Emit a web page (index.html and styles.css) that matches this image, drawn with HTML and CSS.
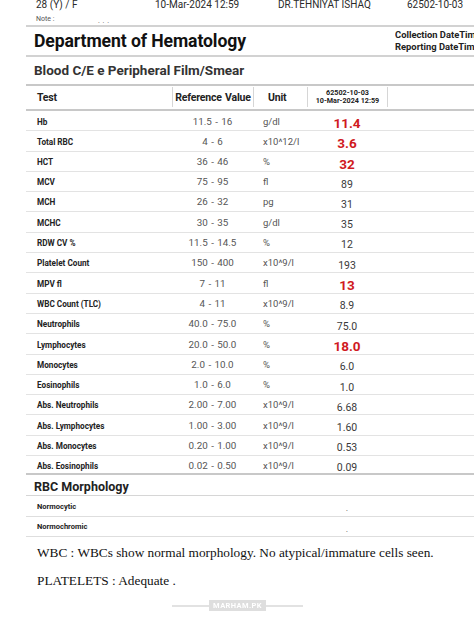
FILE: index.html
```html
<!DOCTYPE html>
<html lang="en">
<head>
    <meta charset="UTF-8">
    <meta name="viewport" content="width=device-width, initial-scale=1.0">
    <title>Department of Hematology - Report</title>
    <link rel="stylesheet" href="styles.css">
</head>
<body>
<div class="page">
    <div class="meta">
        <div class="meta-row">
            <span class="meta-patient">28 (Y) / F</span>
            <span class="meta-date">10-Mar-2024 12:59</span>
            <span class="meta-doctor">DR.TEHNIYAT ISHAQ</span>
            <span class="meta-id">62502-10-03</span>
        </div>
        <div class="note">
            <span class="note-label">Note :</span>
            <span class="note-val">. . .</span>
        </div>
    </div>

    <div class="dept">
        <h1>Department of Hematology</h1>
        <div class="dates">
            <div>Collection DateTime</div>
            <div>Reporting DateTime</div>
        </div>
    </div>

    <h2 class="panel">Blood C/E e Peripheral Film/Smear</h2>

    <div class="results">
        <div class="row head">
            <div class="c-test">Test</div>
            <div class="c-ref">Reference Value</div>
            <div class="c-unit">Unit</div>
            <div class="c-val"><span>62502-10-03</span><span>10-Mar-2024 12:59</span></div>
            <div class="c-rest"></div>
        </div>
        <div id="resultRows"></div>
    </div>

    <h2 class="sub">RBC Morphology</h2>
    <div class="morph">
        <div class="row"><div class="c-test">Normocytic</div><div></div><div></div><div class="c-val dot">.</div><div></div></div>
        <div class="row"><div class="c-test">Normochromic</div><div></div><div></div><div class="c-val dot">.</div><div></div></div>
    </div>

    <div class="remarks">
        <p class="remark">WBC : WBCs show normal morphology. No atypical/immature cells seen.</p>
        <p class="remark">PLATELETS : Adequate .</p>
    </div>

    <div class="watermark">
        <span class="rule"></span>
        <span class="mark">MARHAM.PK</span>
        <span class="rule"></span>
    </div>
</div>

<script>
    // name, reference, unit, result, flagged
    const results = [
        ["Hb", "11.5 - 16", "g/dl", "11.4", true],
        ["Total RBC", "4 - 6", "x10^12/l", "3.6", true],
        ["HCT", "36 - 46", "%", "32", true],
        ["MCV", "75 - 95", "fl", "89", false],
        ["MCH", "26 - 32", "pg", "31", false],
        ["MCHC", "30 - 35", "g/dl", "35", false],
        ["RDW CV %", "11.5 - 14.5", "%", "12", false],
        ["Platelet Count", "150 - 400", "x10^9/l", "193", false],
        ["MPV fl", "7 - 11", "fl", "13", true],
        ["WBC Count (TLC)", "4 - 11", "x10^9/l", "8.9", false],
        ["Neutrophils", "40.0 - 75.0", "%", "75.0", false],
        ["Lymphocytes", "20.0 - 50.0", "%", "18.0", true],
        ["Monocytes", "2.0 - 10.0", "%", "6.0", false],
        ["Eosinophils", "1.0 - 6.0", "%", "1.0", false],
        ["Abs. Neutrophils", "2.00 - 7.00", "x10^9/l", "6.68", false],
        ["Abs. Lymphocytes", "1.00 - 3.00", "x10^9/l", "1.60", false],
        ["Abs. Monocytes", "0.20 - 1.00", "x10^9/l", "0.53", false],
        ["Abs. Eosinophils", "0.02 - 0.50", "x10^9/l", "0.09", false]
    ];

    const rows = document.getElementById("resultRows");
    rows.innerHTML = results.map(r => `
        <div class="row">
            <div class="c-test">${r[0]}</div>
            <div class="c-ref">${r[1]}</div>
            <div class="c-unit">${r[2]}</div>
            <div class="c-val${r[4] ? " high" : ""}">${r[3]}</div>
            <div class="c-rest"></div>
        </div>`).join("");
</script>
</body>
</html>
```

FILE: styles.css
```css
html, body {
    margin: 0;
    background: #fff;
    overflow: hidden;
}
body {
    font-family: Roboto, "Liberation Sans", sans-serif;
    color: #222;
}
.page {
    padding-left: 26px;
    width: 448px;
}

/* patient strip */
.meta {
    height: 26px;
    border-bottom: 2px solid #d2d2d2;
}
.meta-row {
    display: flex;
    margin-top: -1px;
    padding-left: 10px;
    font-size: 10px;
    line-height: 12px;
    color: #2a2a2a;
    white-space: nowrap;
}
.meta-patient { width: 119px; }
.meta-date { width: 123px; }
.meta-doctor { width: 129px; }
.note {
    display: flex;
    padding-left: 10px;
    margin-top: 4px;
    font-size: 7px;
    line-height: 9px;
    color: #555;
}
.note-label { width: 62px; }
.note-val { padding-top: 2px; letter-spacing: 0.5px; }

/* department heading */
.dept {
    display: flex;
    align-items: center;
    height: 28px;
    border-bottom: 2px solid #d2d2d2;
}
.dept h1 {
    flex: 0 0 369px;
    margin: 0;
    padding-left: 8px;
    box-sizing: border-box;
    font-size: 17.6px;
    font-weight: 700;
    color: #111;
    letter-spacing: -0.1px;
}
.dates {
    flex: 1;
    overflow: hidden;
    white-space: nowrap;
    font-size: 9.4px;
    font-weight: 700;
    line-height: 12px;
    color: #222;
}

.panel {
    margin: 0;
    height: 27px;
    line-height: 27px;
    padding-left: 8px;
    font-size: 13.5px;
    font-weight: 700;
    color: #333;
}

/* results grid */
.results {
    border-top: 2px solid #c8c8c8;
    border-bottom: 2px solid #c8c8c8;
}
.row {
    display: grid;
    grid-template-columns: 146px 81px 54px 80px 1fr;
    height: 20.3px;
    box-sizing: border-box;
    border-bottom: 1px solid #e3e3e3;
}
.row > div {
    display: flex;
    align-items: center;
    white-space: nowrap;
}
#resultRows .row:last-child {
    height: 17px;
    border-bottom: none;
}
.row.head {
    height: 25px;
    border-bottom: 2px solid #c8c8c8;
}
.row.head > div {
    font-size: 10.5px;
    font-weight: 700;
    color: #222;
    letter-spacing: -0.2px;
    margin: 1px 0 2px;
}
.row.head > div + div {
    border-left: 1px solid #d6d6d6;
}
.row.head .c-test { padding-left: 11px; }
.row.head .c-ref { justify-content: center; }
.row.head .c-unit { padding-left: 14px; }
.row.head .c-val {
    flex-direction: column;
    justify-content: center;
    padding: 0;
    font-size: 7.2px;
    line-height: 8px;
    letter-spacing: 0;
}

.c-test {
    padding-left: 11px;
    padding-top: 1px;
    font-size: 8.2px;
    font-weight: 700;
    color: #232323;
}
.c-ref {
    justify-content: center;
    font-size: 9.8px;
    color: #555;
    word-spacing: 1px;
}
.c-unit {
    padding-left: 10px;
    font-size: 9.5px;
    color: #555;
}
.c-val {
    justify-content: center;
    padding-top: 5px;
    font-size: 10.5px;
    color: #3a3a3a;
}
.c-val.high {
    padding-top: 4px;
    font-size: 13.5px;
    font-weight: 700;
    color: #d01a1f;
}

/* morphology */
.sub {
    margin: 0;
    height: 21px;
    padding-top: 2px;
    box-sizing: border-box;
    line-height: 19px;
    padding-left: 8px;
    font-size: 12.5px;
    font-weight: 700;
    color: #222;
    border-bottom: 1px solid #d6d6d6;
}
.morph .row {
    height: 20.5px;
    border-bottom: 1px solid #dedede;
}
.morph .c-test {
    font-size: 7.5px;
}
.morph .dot {
    font-size: 9px;
    color: #555;
}

.remarks {
    padding-top: 2px;
}
.remark {
    margin: 0;
    padding-left: 11px;
    font-family: "Liberation Serif", "Times New Roman", serif;
    font-size: 13.3px;
    line-height: 28px;
    color: #111;
}

.watermark {
    display: flex;
    align-items: center;
    width: 131px;
    margin: 5px 0 0 146px;
}
.rule {
    flex: 1;
    height: 2px;
    background: #e2e2e2;
}
.mark {
    padding: 1px 4px;
    background: #dedede;
    color: #fff;
    font-size: 7.5px;
    font-weight: 700;
    letter-spacing: 0.4px;
    filter: blur(0.5px);
}
```
